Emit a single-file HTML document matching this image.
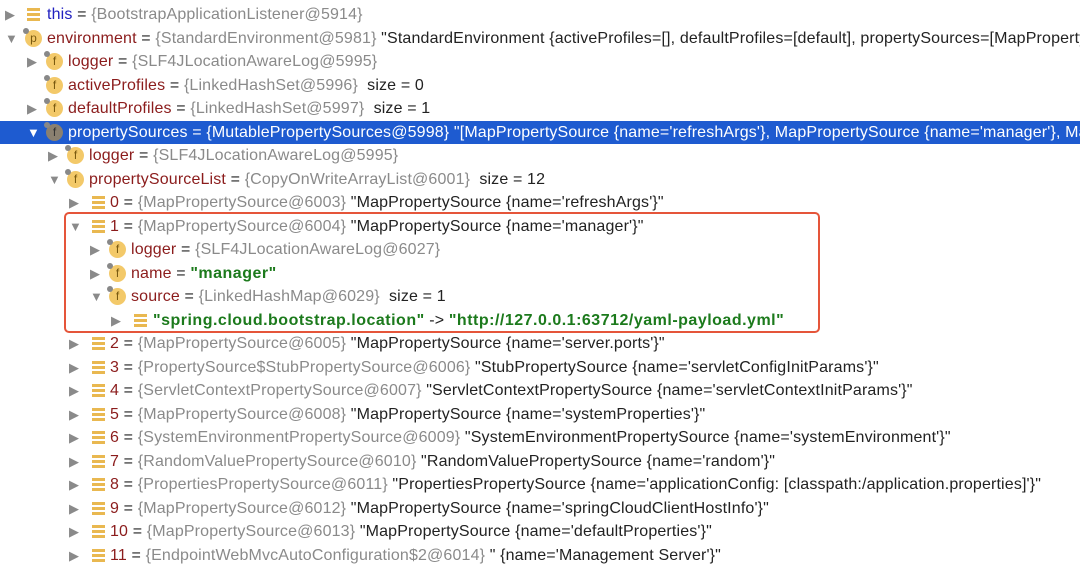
<!DOCTYPE html>
<html><head><meta charset="utf-8"><style>
body{margin:0;width:1080px;height:572px;overflow:hidden;background:#fff;font-family:"Liberation Sans",Arial,sans-serif;font-size:16px;letter-spacing:0.15px;position:relative}
.r{position:absolute;left:0;width:1080px;height:23.5px;line-height:23.5px;white-space:nowrap;overflow:hidden;color:#222}
.sel{background:#1e5bd0;color:#fff}
.sel .n,.sel .t{color:#fff}
.a{position:absolute;top:0;font-size:13px;color:#8a8a8a}
.ic{position:absolute;top:3px;width:17px;height:17px}
.f{border-radius:50%;background:#f3c969;color:#7a5a10;font-size:12px;text-align:center;line-height:17px;letter-spacing:0}
.f::before{content:"";position:absolute;left:-2px;top:-2px;width:6px;height:6px;border-radius:50%;background:#888}
.l{background:repeating-linear-gradient(#e9b850 0 3px,transparent 3px 5px);width:13px;height:14px;top:5px}
.tx{position:absolute;top:0}
.n{color:#8b1c1c}.t{color:#8a8a8a}.g{color:#1c7a1c;font-weight:bold;letter-spacing:0.5px}.b{color:#2020c0}
#box{position:absolute;left:64px;top:212px;width:752px;height:117px;border:2.5px solid #e5553a;border-radius:5px}
</style></head><body>
<div class="r" style="top:3px"><span class="a" style="left:5px">▶</span><span class="ic l" style="left:27px"></span><span class="tx" style="left:47px"><span class="b">this</span> = <span class="t">{BootstrapApplicationListener@5914}</span></span></div>
<div class="r" style="top:26.5px"><span class="a" style="left:5px">▼</span><span class="ic f" style="left:25px">p</span><span class="tx" style="left:47px"><span class="n">environment</span> = <span class="t">{StandardEnvironment@5981}</span> "StandardEnvironment {activeProfiles=[], defaultProfiles=[default], propertySources=[MapPropertySource {name='refreshArgs'}]}"</span></div>
<div class="r" style="top:50px"><span class="a" style="left:27px">▶</span><span class="ic f" style="left:46px">f</span><span class="tx" style="left:68px"><span class="n">logger</span> = <span class="t">{SLF4JLocationAwareLog@5995}</span></span></div>
<div class="r" style="top:73.5px"><span class="ic f" style="left:46px">f</span><span class="tx" style="left:68px"><span class="n">activeProfiles</span> = <span class="t">{LinkedHashSet@5996}</span>&nbsp; size = 0</span></div>
<div class="r" style="top:97px"><span class="a" style="left:27px">▶</span><span class="ic f" style="left:46px">f</span><span class="tx" style="left:68px"><span class="n">defaultProfiles</span> = <span class="t">{LinkedHashSet@5997}</span>&nbsp; size = 1</span></div>
<div class="r sel" style="top:120.5px"><span class="a" style="left:27px;color:#fff">▼</span><span class="ic f" style="left:46px;background:#8a8070;color:#333">f</span><span class="tx" style="left:68px"><span class="n">propertySources</span> = <span class="t">{MutablePropertySources@5998}</span> "[MapPropertySource {name='refreshArgs'}, MapPropertySource {name='manager'}, MapPropertySource {name='server.ports'}]"</span></div>
<div class="r" style="top:144px"><span class="a" style="left:48px">▶</span><span class="ic f" style="left:67px">f</span><span class="tx" style="left:89px"><span class="n">logger</span> = <span class="t">{SLF4JLocationAwareLog@5995}</span></span></div>
<div class="r" style="top:167.5px"><span class="a" style="left:48px">▼</span><span class="ic f" style="left:67px">f</span><span class="tx" style="left:89px"><span class="n">propertySourceList</span> = <span class="t">{CopyOnWriteArrayList@6001}</span>&nbsp; size = 12</span></div>
<div class="r" style="top:191px"><span class="a" style="left:69px">▶</span><span class="ic l" style="left:92px"></span><span class="tx" style="left:110px"><span class="n">0</span> = <span class="t">{MapPropertySource@6003}</span> "MapPropertySource {name='refreshArgs'}"</span></div>
<div class="r" style="top:214.5px"><span class="a" style="left:69px">▼</span><span class="ic l" style="left:92px"></span><span class="tx" style="left:110px"><span class="n">1</span> = <span class="t">{MapPropertySource@6004}</span> "MapPropertySource {name='manager'}"</span></div>
<div class="r" style="top:238px"><span class="a" style="left:90px">▶</span><span class="ic f" style="left:109px">f</span><span class="tx" style="left:131px"><span class="n">logger</span> = <span class="t">{SLF4JLocationAwareLog@6027}</span></span></div>
<div class="r" style="top:261.5px"><span class="a" style="left:90px">▶</span><span class="ic f" style="left:109px">f</span><span class="tx" style="left:131px"><span class="n">name</span> = <span class="g">"manager"</span></span></div>
<div class="r" style="top:285px"><span class="a" style="left:90px">▼</span><span class="ic f" style="left:109px">f</span><span class="tx" style="left:131px"><span class="n">source</span> = <span class="t">{LinkedHashMap@6029}</span>&nbsp; size = 1</span></div>
<div class="r" style="top:308.5px"><span class="a" style="left:111px">▶</span><span class="ic l" style="left:134px"></span><span class="tx" style="left:153px"><span class="g">"spring.cloud.bootstrap.location"</span> -&gt; <span class="g">"http://127.0.0.1:63712/yaml-payload.yml"</span></span></div>
<div class="r" style="top:332px"><span class="a" style="left:69px">▶</span><span class="ic l" style="left:92px"></span><span class="tx" style="left:110px"><span class="n">2</span> = <span class="t">{MapPropertySource@6005}</span> "MapPropertySource {name='server.ports'}"</span></div>
<div class="r" style="top:355.5px"><span class="a" style="left:69px">▶</span><span class="ic l" style="left:92px"></span><span class="tx" style="left:110px"><span class="n">3</span> = <span class="t">{PropertySource$StubPropertySource@6006}</span> "StubPropertySource {name='servletConfigInitParams'}"</span></div>
<div class="r" style="top:379px"><span class="a" style="left:69px">▶</span><span class="ic l" style="left:92px"></span><span class="tx" style="left:110px"><span class="n">4</span> = <span class="t">{ServletContextPropertySource@6007}</span> "ServletContextPropertySource {name='servletContextInitParams'}"</span></div>
<div class="r" style="top:402.5px"><span class="a" style="left:69px">▶</span><span class="ic l" style="left:92px"></span><span class="tx" style="left:110px"><span class="n">5</span> = <span class="t">{MapPropertySource@6008}</span> "MapPropertySource {name='systemProperties'}"</span></div>
<div class="r" style="top:426px"><span class="a" style="left:69px">▶</span><span class="ic l" style="left:92px"></span><span class="tx" style="left:110px"><span class="n">6</span> = <span class="t">{SystemEnvironmentPropertySource@6009}</span> "SystemEnvironmentPropertySource {name='systemEnvironment'}"</span></div>
<div class="r" style="top:449.5px"><span class="a" style="left:69px">▶</span><span class="ic l" style="left:92px"></span><span class="tx" style="left:110px"><span class="n">7</span> = <span class="t">{RandomValuePropertySource@6010}</span> "RandomValuePropertySource {name='random'}"</span></div>
<div class="r" style="top:473px"><span class="a" style="left:69px">▶</span><span class="ic l" style="left:92px"></span><span class="tx" style="left:110px"><span class="n">8</span> = <span class="t">{PropertiesPropertySource@6011}</span> "PropertiesPropertySource {name='applicationConfig: [classpath:/application.properties]'}"</span></div>
<div class="r" style="top:496.5px"><span class="a" style="left:69px">▶</span><span class="ic l" style="left:92px"></span><span class="tx" style="left:110px"><span class="n">9</span> = <span class="t">{MapPropertySource@6012}</span> "MapPropertySource {name='springCloudClientHostInfo'}"</span></div>
<div class="r" style="top:520px"><span class="a" style="left:69px">▶</span><span class="ic l" style="left:92px"></span><span class="tx" style="left:110px"><span class="n">10</span> = <span class="t">{MapPropertySource@6013}</span> "MapPropertySource {name='defaultProperties'}"</span></div>
<div class="r" style="top:543.5px"><span class="a" style="left:69px">▶</span><span class="ic l" style="left:92px"></span><span class="tx" style="left:110px"><span class="n">11</span> = <span class="t">{EndpointWebMvcAutoConfiguration$2@6014}</span> " {name='Management Server'}"</span></div>
<div id="box"></div>
</body></html>
